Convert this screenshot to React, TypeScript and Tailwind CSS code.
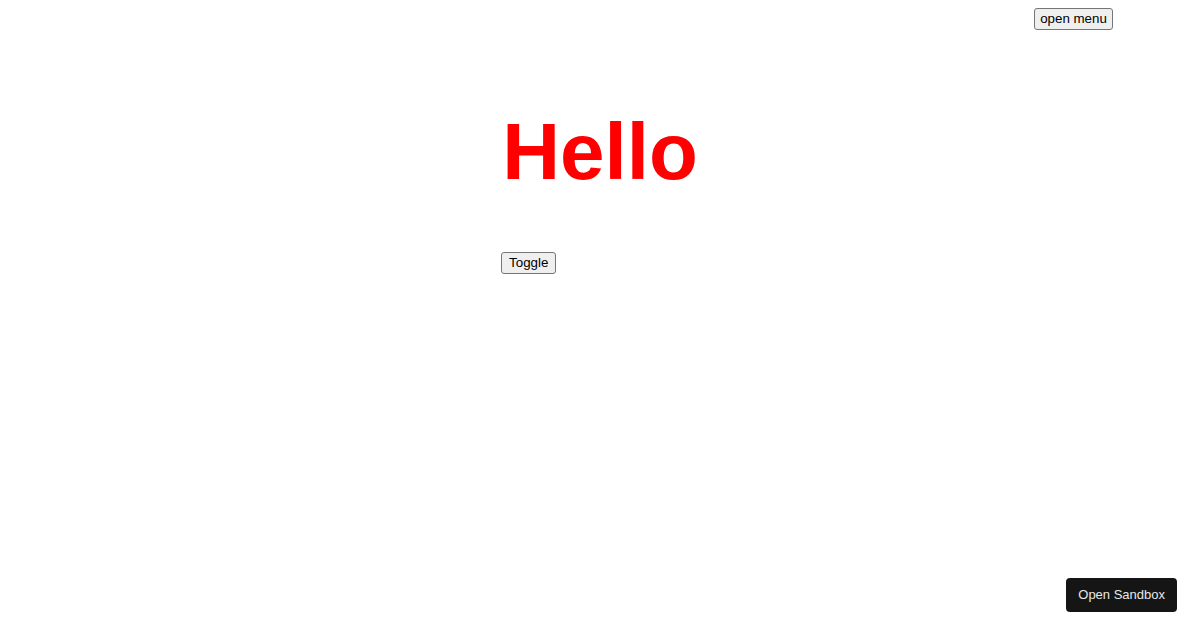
import React, { useState } from 'react';

export default function App() {
  const [show, setShow] = useState(true);
  const [menuOpen, setMenuOpen] = useState(false);

  // mimic the browser's default button look
  const nativeButton =
    'bg-[#efefef] border border-[#767676] rounded-[3px] py-[2px] text-[13.33px] leading-[16px] text-black';

  return (
    <div className="min-h-screen bg-white font-['Liberation_Sans',Arial,sans-serif]">
      {/* Header */}
      <div className="flex justify-end pt-2 pr-[87px]">
        <button onClick={() => setMenuOpen(!menuOpen)} className={`${nativeButton} w-[79px] px-0`}>
          open menu
        </button>
      </div>

      {/* Main */}
      <div className="flex justify-center pt-[76px]">
        <div>
          <h1 className={`text-[80px] font-bold leading-[92px] text-[#ff0000] ${show ? '' : 'invisible'}`}>
            Hello
          </h1>
          <div className="pt-[52px] -ml-px">
            <button onClick={() => setShow(!show)} className={`${nativeButton} w-[55px] px-0`}>
              Toggle
            </button>
          </div>
        </div>
      </div>

      {/* Sandbox link */}
      <a className="fixed right-[23px] bottom-[18px] h-[34px] px-3 flex items-center rounded bg-[#151515] text-[13px] text-[#e8e8e8] cursor-pointer">
        Open Sandbox
      </a>
    </div>
  );
}
